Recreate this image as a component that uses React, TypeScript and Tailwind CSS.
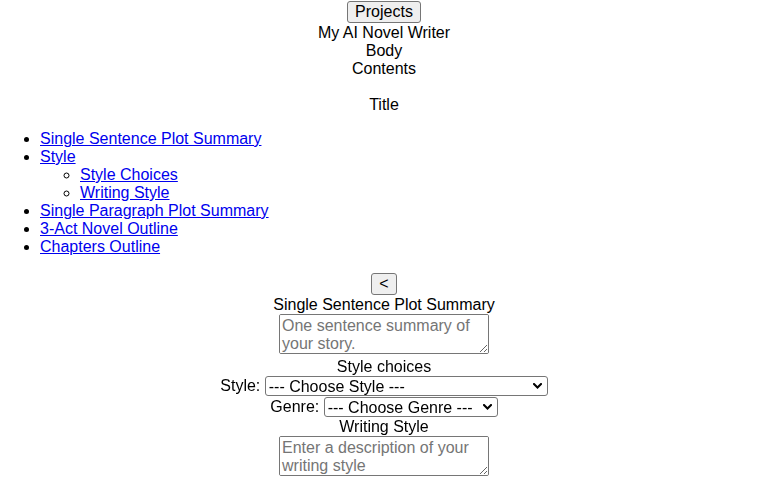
import React from "react";

function Chevron() {
  return (
    <svg
      className="pointer-events-none absolute right-[6px] top-[7px]"
      width="9"
      height="6"
      viewBox="0 0 9 6"
      fill="none"
    >
      <path d="M1 1 L4.5 4.5 L8 1" stroke="#000" strokeWidth="2" strokeLinecap="square" strokeLinejoin="miter" />
    </svg>
  );
}

function Select({ width, label }: { width: string; label: string }) {
  return (
    <span className={`relative mt-px inline-block h-[20px] ${width}`}>
      <select className="block h-[20px] w-full appearance-none rounded-[3px] border border-[#767676] bg-white pl-[3px] pr-[20px] text-left text-[16px] leading-[normal] text-black">
        <option>{label}</option>
      </select>
      <Chevron />
    </span>
  );
}

function Area({ placeholder }: { placeholder: string }) {
  return (
    <div className="flex justify-center pt-px pb-[3px]">
      <textarea
        placeholder={placeholder}
        className="block h-[40px] w-[210px] rounded-[2px] border border-[#767676] bg-white px-[2px] py-[2px] text-[16px] leading-[normal] text-black placeholder:text-[#757575]"
      />
    </div>
  );
}

const btn =
  "rounded-[3px] border border-[#767676] bg-[#efefef] px-[7px] py-px text-[16px] leading-[normal] text-black";

const link = "text-[#0000ee] underline";

export default function App() {
  return (
    <div className="min-h-[480px] bg-white text-center font-['Liberation_Sans',Arial,sans-serif] text-[16px] leading-[20px] text-black">
      <div className="flex h-[23px] justify-center pt-px">
        <button className={btn}>Projects</button>
      </div>
      <div className="h-[18px]">My AI Novel Writer</div>
      <div className="h-[18px]">Body</div>
      <div className="h-[18px]">Contents</div>
      <div className="h-[18px]" />
      <div className="h-[18px]">Title</div>
      <ul className="my-4 list-outside list-disc pl-[40px] text-left">
        <li className="h-[18px]">
          <a href="#" className={link}>Single Sentence Plot Summary</a>
        </li>
        <li>
          <div className="h-[18px]">
            <a href="#" className={link}>Style</a>
          </div>
          <ul className="list-outside list-[circle] pl-[40px]">
            <li className="h-[18px]">
              <a href="#" className={link}>Style Choices</a>
            </li>
            <li className="h-[18px]">
              <a href="#" className={link}>Writing Style</a>
            </li>
          </ul>
        </li>
        <li className="h-[18px]">
          <a href="#" className={link}>Single Paragraph Plot Summary</a>
        </li>
        <li className="h-[18px]">
          <a href="#" className={link}>3-Act Novel Outline</a>
        </li>
        <li className="h-[18px]">
          <a href="#" className={link}>Chapters Outline</a>
        </li>
      </ul>
      <div className="flex h-[24px] justify-center pt-[2px]">
        <button className={btn}>&lt;</button>
      </div>
      <div className="h-[18px]">Single Sentence Plot Summary</div>
      <Area placeholder="One sentence summary of your story." />
      <div className="h-[18px]">Style choices</div>
      <div className="flex h-[21px] items-start justify-center">
        <span className="mr-[4.45px] h-[18px] pt-px">Style:</span>
        <Select width="w-[283px]" label="--- Choose Style ---" />
      </div>
      <div className="flex h-[21px] items-start justify-center">
        <span className="mr-[4.45px] h-[18px] pt-px">Genre:</span>
        <Select width="w-[174px]" label="--- Choose Genre ---" />
      </div>
      <div className="h-[18px]">Writing Style</div>
      <Area placeholder="Enter a description of your writing style" />
    </div>
  );
}
